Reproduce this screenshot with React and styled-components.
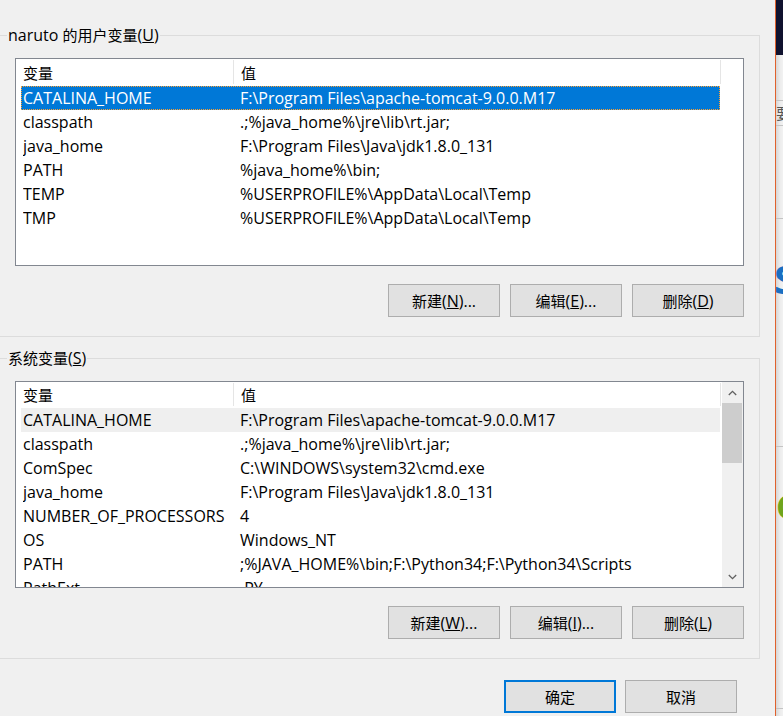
import React from "react";
import styled, { createGlobalStyle } from "styled-components";

const Global = createGlobalStyle`
  html, body { margin: 0; padding: 0; background: #f0f0f0; }
  body {
    font-family: "Open Sans", "Noto Sans CJK SC", sans-serif;
    font-size: 16px;
    color: #000;
  }
  * { box-sizing: border-box; }
`;

const Page = styled.div`
  display: flex;
  width: 783px;
  height: 716px;
  overflow: hidden;
  background: #f0f0f0;
`;

const Dialog = styled.div`
  flex: none;
  width: 776px;
  border-right: 1px solid #e0612c;
  padding: 25px 38px 0 0;
  display: flex;
  flex-direction: column;
`;

const Group = styled.fieldset`
  margin: ${(p) => p.$mt}px 0 0 -4px;
  width: 764px;
  min-inline-size: 0;
  border: 1px solid #dcdcdc;
  padding: 13px 15px 19px 10px;
`;

const Legend = styled.legend`
  padding: 0 1px;
  line-height: 20px;
  height: 20px;
`;

const Cjk = styled.span`
  font-family: "Noto Sans CJK SC", sans-serif;
  font-size: 15px;
`;

const ListView = styled.div`
  margin-left: 8px;
  height: ${(p) => p.$h}px;
  border: 1px solid #828790;
  background: #fff;
  display: flex;
  overflow: hidden;
`;

const ListBody = styled.div`
  flex: 1;
  min-width: 0;
  display: flex;
  flex-direction: column;
`;

const Header = styled.div`
  flex: none;
  display: grid;
  grid-template-columns: 218px 487px;
  height: ${(p) => p.$h}px;
`;

const HeaderCell = styled.div`
  display: flex;
  align-items: center;
  padding-left: 7px;
  border-right: 1px solid #e5e5e5;
  margin: 1px 0 2px;
  white-space: nowrap;
`;

const Row = styled.div`
  flex: none;
  display: grid;
  grid-template-columns: 212px 1fr;
  align-items: center;
  margin-left: 5px;
  width: 699px;
  height: 24px;
  padding-left: 1px;
  border: 1px ${(p) => (p.$selected ? "dotted #ffa030" : "solid transparent")};
  background: ${(p) => (p.$selected ? "#0078d7" : p.$hot ? "#efefef" : "transparent")};
  color: ${(p) => (p.$selected ? "#fff" : "#000")};
  white-space: nowrap;
  overflow: hidden;
`;

const Cell = styled.span`
  padding-left: ${(p) => (p.$value ? 5 : 0)}px;
  overflow: hidden;
`;

const Scrollbar = styled.div`
  flex: none;
  width: 21px;
  background: #f0f0f0;
  display: flex;
  flex-direction: column;
`;

const ScrollArrow = styled.div`
  flex: none;
  height: 21px;
  display: flex;
  align-items: center;
  justify-content: center;
`;

const Thumb = styled.div`
  flex: none;
  height: 60px;
  margin: 0 1px 0 0;
  background: #cdcdcd;
`;

const Spacer = styled.div`
  flex: 1;
`;

const ButtonRow = styled.div`
  display: flex;
  justify-content: flex-end;
  gap: ${(p) => p.$gap || 10}px;
  margin-top: ${(p) => p.$mt}px;
`;

const Button = styled.button`
  width: 112px;
  height: 33px;
  padding: 0;
  background: #e1e1e1;
  border: ${(p) => (p.$primary ? "2px solid #0078d7" : "1px solid #adadad")};
  font: inherit;
  color: #000;
  display: flex;
  align-items: center;
  justify-content: center;
  white-space: nowrap;
`;

const Strip = styled.div`
  flex: 1;
  display: flex;
  flex-direction: column;
  background: linear-gradient(to right, #d6d6d6, #ececec 4px, #f2f2f2);
  overflow: hidden;
`;

const Navy = styled.div`
  flex: none;
  height: 55px;
  background: #10122f;
`;

const StripSection = styled.div`
  flex: none;
  height: ${(p) => p.$h}px;
  border-bottom: 1px solid #c4c4c4;
  padding-top: ${(p) => p.$pt || 0}px;
  overflow: hidden;
  white-space: nowrap;
`;

const StripText = styled.span`
  display: block;
  font-size: ${(p) => p.$size}px;
  line-height: ${(p) => p.$lh}px;
  font-weight: ${(p) => p.$weight || 400};
  color: ${(p) => p.$color};
  margin-left: ${(p) => p.$ml || 0}px;
`;

const Chevron = ({ up }) => (
  <svg width="9" height="6" viewBox="0 0 9 6">
    <polyline
      points={up ? "0.8,5 4.5,1.3 8.2,5" : "0.8,1 4.5,4.7 8.2,1"}
      fill="none"
      stroke="#606060"
      strokeWidth="1.3"
    />
  </svg>
);

const userVars = [
  ["CATALINA_HOME", "F:\\Program Files\\apache-tomcat-9.0.0.M17"],
  ["classpath", ".;%java_home%\\jre\\lib\\rt.jar;"],
  ["java_home", "F:\\Program Files\\Java\\jdk1.8.0_131"],
  ["PATH", "%java_home%\\bin;"],
  ["TEMP", "%USERPROFILE%\\AppData\\Local\\Temp"],
  ["TMP", "%USERPROFILE%\\AppData\\Local\\Temp"],
];

const sysVars = [
  ["CATALINA_HOME", "F:\\Program Files\\apache-tomcat-9.0.0.M17"],
  ["classpath", ".;%java_home%\\jre\\lib\\rt.jar;"],
  ["ComSpec", "C:\\WINDOWS\\system32\\cmd.exe"],
  ["java_home", "F:\\Program Files\\Java\\jdk1.8.0_131"],
  ["NUMBER_OF_PROCESSORS", "4"],
  ["OS", "Windows_NT"],
  ["PATH", ";%JAVA_HOME%\\bin;F:\\Python34;F:\\Python34\\Scripts"],
  ["PathExt", ".PY"],
];

const Rows = ({ data, selected, hot }) =>
  data.map(([k, v], i) => (
    <Row key={k + i} $selected={i === selected} $hot={i === hot}>
      <Cell>{k}</Cell>
      <Cell $value>{v}</Cell>
    </Row>
  ));

const ListHeader = ({ h }) => (
  <Header $h={h}>
    <HeaderCell>
      <Cjk>变量</Cjk>
    </HeaderCell>
    <HeaderCell>
      <Cjk>值</Cjk>
    </HeaderCell>
  </Header>
);

export default function App() {
  return (
    <>
      <Global />
      <Page>
        <Dialog>
          <Group $mt={0}>
            <Legend>
              naruto <Cjk>的用户变量</Cjk>(<u>U</u>)
            </Legend>
            <ListView $h={208}>
              <ListBody>
                <ListHeader h={27} />
                <Rows data={userVars} selected={0} />
              </ListBody>
            </ListView>
            <ButtonRow $mt={18}>
              <Button>
                <Cjk>新建</Cjk>(<u>N</u>)...
              </Button>
              <Button>
                <Cjk>编辑</Cjk>(<u>E</u>)...
              </Button>
              <Button>
                <Cjk>删除</Cjk>(<u>D</u>)
              </Button>
            </ButtonRow>
          </Group>

          <Group $mt={11}>
            <Legend>
              <Cjk>系统变量</Cjk>(<u>S</u>)
            </Legend>
            <ListView $h={207}>
              <ListBody>
                <ListHeader h={26} />
                <Rows data={sysVars} hot={0} />
              </ListBody>
              <Scrollbar>
                <ScrollArrow>
                  <Chevron up />
                </ScrollArrow>
                <Thumb />
                <Spacer />
                <ScrollArrow>
                  <Chevron />
                </ScrollArrow>
              </Scrollbar>
            </ListView>
            <ButtonRow $mt={18}>
              <Button>
                <Cjk>新建</Cjk>(<u>W</u>)...
              </Button>
              <Button>
                <Cjk>编辑</Cjk>(<u>I</u>)...
              </Button>
              <Button>
                <Cjk>删除</Cjk>(<u>L</u>)
              </Button>
            </ButtonRow>
          </Group>

          <ButtonRow $mt={21} $gap={9}>
            <Button $primary>
              <Cjk>确定</Cjk>
            </Button>
            <Button>
              <Cjk>取消</Cjk>
            </Button>
          </ButtonRow>
        </Dialog>

        <Strip>
          <Navy />
          <StripSection $h={46} />
          <StripSection $h={25}>
            <StripText $size={15} $lh={24} $color="#555">
              要
            </StripText>
          </StripSection>
          <StripSection $h={93} />
          <StripSection $h={228} $pt={40}>
            <StripText $size={40} $lh={40} $weight={700} $color="#1a6fc2" $ml={-2}>
              S
            </StripText>
          </StripSection>
          <StripSection $h={262} $pt={42}>
            <StripText $size={34} $lh={34} $weight={700} $color="#6fa51c">
              C
            </StripText>
          </StripSection>
        </Strip>
      </Page>
    </>
  );
}
